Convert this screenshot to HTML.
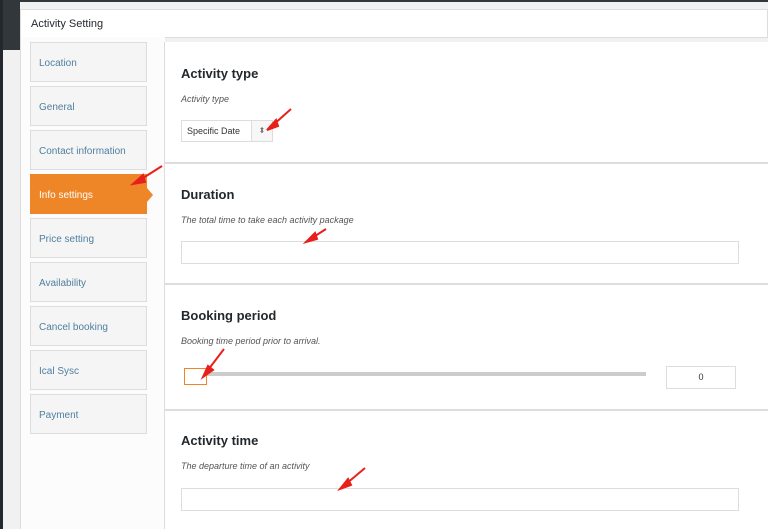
<!DOCTYPE html><html><head><style>
*{box-sizing:border-box;margin:0;padding:0}
body{width:768px;height:529px;overflow:hidden;background:#f1f1f1;font-family:"Liberation Sans",sans-serif;position:relative}
.dark{position:absolute;left:0;top:0;width:3px;height:529px;background:#23282d}
.dark2{position:absolute;left:0;top:0;width:20px;height:50px;background:#32373c}
.top{position:absolute;left:0;top:0;width:768px;height:2px;background:#32373c}
.hdr{position:absolute;left:20px;top:9px;width:748px;height:29px;background:#fff;border:1px solid #ddd;font-size:11px;color:#23282d;padding:8px 10px}
.side{position:absolute;left:20px;top:37px;width:145px;height:492px;background:#fcfcfc;border-left:1px solid #ddd}
.tab{position:absolute;left:30px;width:117px;height:40px;border:1px solid #ddd;background:#f5f5f5;color:#4e7f9e;font-size:10px;padding:15px 8px}
.tab.on{background:#ee8627;border-color:#ee8627;color:#fff}
.tab.on:after{content:"";position:absolute;right:-7px;top:13px;border-left:6px solid #ee8627;border-top:7px solid transparent;border-bottom:7px solid transparent}
.main{position:absolute;left:164px;top:42px;width:604px;height:487px;background:#fff;border-left:1px solid #ddd}
.sec{position:absolute;left:0;width:604px;border-bottom:2px solid #ddd}
h3{position:absolute;left:16px;font-size:13px;color:#23282d;font-weight:bold}
.d{position:absolute;left:16px;font-size:9px;font-style:italic;color:#555}
.in{position:absolute;border:1px solid #ddd;background:#fff}
.arr{position:absolute}
</style></head><body>
<div class="top"></div><div class="dark2"></div><div class="dark"></div>
<div class="hdr">Activity Setting</div>
<div class="side"></div>
<div class="tab" style="top:42px">Location</div>
<div class="tab" style="top:86px">General</div>
<div class="tab" style="top:130px">Contact information</div>
<div class="tab on" style="top:174px">Info settings</div>
<div class="tab" style="top:218px">Price setting</div>
<div class="tab" style="top:262px">Availability</div>
<div class="tab" style="top:306px">Cancel booking</div>
<div class="tab" style="top:350px">Ical Sysc</div>
<div class="tab" style="top:394px">Payment</div>
<div class="main">
<div class="sec" style="top:0;height:122px"></div>
<div class="sec" style="top:122px;height:121px"></div>
<div class="sec" style="top:243px;height:126px"></div>
<h3 style="top:24px">Activity type</h3>
<div class="d" style="top:52px">Activity type</div>
<div class="in" style="left:16px;top:78px;width:92px;height:22px;font-size:9px;color:#333;padding:5px 5px">Specific Date</div>
<div class="in" style="left:86px;top:78px;width:22px;height:22px;background:#f7f7f7;font-size:8px;color:#777;text-align:center;line-height:20px">⬍</div>
<h3 style="top:145px">Duration</h3>
<div class="d" style="top:173px">The total time to take each activity package</div>
<div class="in" style="left:16px;top:199px;width:558px;height:23px"></div>
<h3 style="top:266px">Booking period</h3>
<div class="d" style="top:294px">Booking time period prior to arrival.</div>
<div style="position:absolute;left:40px;top:330px;width:441px;height:4px;background:#ccc"></div>
<div class="in" style="left:19px;top:326px;width:23px;height:17px;border-color:#ee8627"></div>
<div class="in" style="left:501px;top:324px;width:70px;height:23px;font-size:9px;color:#333;text-align:center;line-height:21px">0</div>
<h3 style="top:391px">Activity time</h3>
<div class="d" style="top:419px">The departure time of an activity</div>
<div class="in" style="left:16px;top:446px;width:558px;height:23px"></div>
</div>
<svg class="arr" style="left:0;top:0" width="768" height="529">
<g stroke="#e8201c" stroke-width="2" fill="#e8201c">
<line x1="291" y1="109" x2="272" y2="126"/><polygon points="267,130 276,120 278,126"/>
<line x1="162" y1="166" x2="140" y2="180"/><polygon points="133,184 143,175 145,182"/>
<line x1="326" y1="229" x2="312" y2="238"/><polygon points="306,242 315,233 317,239"/>
<line x1="224" y1="349" x2="208" y2="370"/><polygon points="203,377 208,366 213,370"/>
<line x1="365" y1="468" x2="346" y2="484"/><polygon points="340,489 348,479 351,485"/>
</g></svg>
</body></html>
